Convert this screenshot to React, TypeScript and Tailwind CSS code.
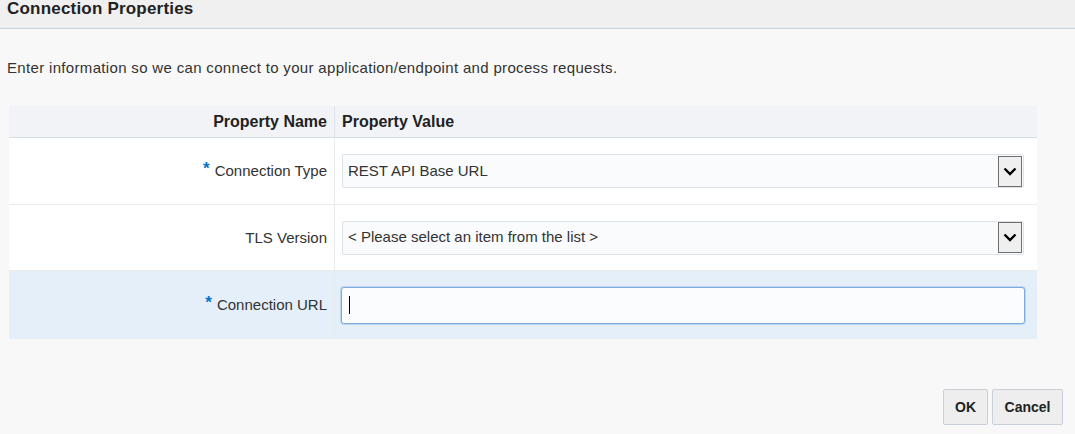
import React from "react";

function Chevron() {
  return (
    <svg width="14" height="9" viewBox="0 0 14 9">
      <path d="M1.5 1.5 L7 7 L12.5 1.5" fill="none" stroke="#000" strokeWidth="2.4" />
    </svg>
  );
}

function Select({ value }: { value: string }) {
  return (
    <div className="flex h-[34px] w-[682px] items-center rounded-[2px] border border-[#dde2e8] bg-[#f9fbfd] pl-[5px] pr-[1px]">
      <span className="flex-1 text-[15px] text-[#333333]">{value}</span>
      <div className="flex h-[31px] w-[24px] items-center justify-center border border-[#6f6f6f] bg-[#efefef]">
        <Chevron />
      </div>
    </div>
  );
}

function Label({ text, required }: { text: string; required?: boolean }) {
  return (
    <div className="flex w-[326px] items-center justify-end border-r border-[#e6ebf0] pr-[7px] pt-[1px] text-[15px] text-[#333333]">
      {required && (
        <span className="mr-[5px] -translate-y-[3px] text-[17px] font-bold leading-none text-[#0572ce]">*</span>
      )}
      {text}
    </div>
  );
}

export default function App() {
  return (
    <div
      className="flex h-[434px] w-[1075px] flex-col bg-[#f8f8f8]"
      style={{ fontFamily: '"Liberation Sans", Arial, sans-serif' }}
    >
      <div className="flex h-[29px] items-start border-b border-[#c5d2de] bg-[#f0f0f0] pl-[7px]">
        <span className="mt-[-1px] text-[17px] font-bold leading-[20px] tracking-[0.2px] text-[#222222]">
          Connection Properties
        </span>
      </div>

      <div className="mt-[29px] pl-[7px] text-[15px] leading-[20px] tracking-[0.33px] text-[#333333]">
        Enter information so we can connect to your application/endpoint and process requests.
      </div>

      <div className="ml-[9px] mt-[28px] flex w-[1028px] flex-col">
        <div className="flex h-[32px] border-b border-[#d5dee7] bg-[#f2f3f6]">
          <div className="flex w-[326px] items-center justify-end border-r border-[#dfe6ee] pr-[7px] text-[16px] font-bold text-[#222222]">
            Property Name
          </div>
          <div className="flex items-center pl-[7px] text-[16px] font-bold text-[#222222]">Property Value</div>
        </div>

        <div className="flex h-[67px] border-b border-[#ececec] bg-white">
          <Label text="Connection Type" required />
          <div className="flex items-center pl-[7px]">
            <Select value="REST API Base URL" />
          </div>
        </div>

        <div className="flex h-[66px] border-b border-[#ececec] bg-white">
          <Label text="TLS Version" />
          <div className="flex items-center pl-[7px]">
            <Select value="< Please select an item from the list >" />
          </div>
        </div>

        <div className="flex h-[68px] bg-[#e4eff9]">
          <Label text="Connection URL" required />
          <div className="flex items-center pl-[6px]">
            <div className="flex h-[37px] w-[684px] items-center rounded-[3px] border border-[#7eaae0] bg-[#fafcfe] pl-[7px] shadow-[0_0_0_1px_rgba(120,170,230,0.35)]">
              <div className="h-[18px] w-[1px] bg-black" />
            </div>
          </div>
        </div>
      </div>

      <div className="mt-auto mb-[9px] flex justify-end gap-[4px] pr-[12px]">
        <button className="h-[36px] w-[45px] rounded-[2px] border border-[#c9d0d8] bg-[#eeeeee] text-[14px] font-bold text-[#222222]">
          OK
        </button>
        <button className="h-[36px] w-[71px] rounded-[2px] border border-[#c9d0d8] bg-[#eeeeee] text-[14px] font-bold text-[#222222]">
          Cancel
        </button>
      </div>
    </div>
  );
}
